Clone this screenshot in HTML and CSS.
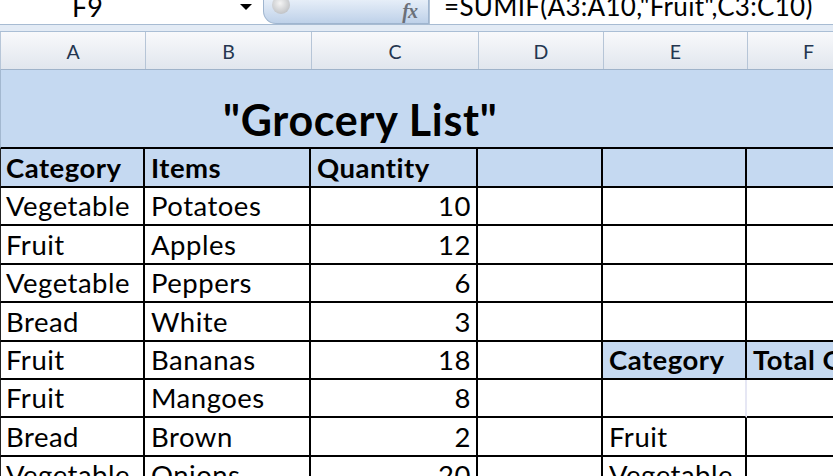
FILE: index.html
```html
<!DOCTYPE html>
<html>
<head>
<meta charset="utf-8">
<link rel="stylesheet" href="styles.css">
</head>
<body>
<div class="app">
  <div class="formula-bar">
    <div class="name-box">
      <span class="cell-ref">F9</span>
      <span class="dropdown"></span>
    </div>
    <div class="fx-pill">
      <span class="knob"></span>
      <span class="fx">fx</span>
    </div>
    <div class="formula"><span class="formula-text">=SUMIF(A3:A10,"Fruit",C3:C10)</span></div>
  </div>
  <div class="strip"></div>
  <div class="col-headers">
    <div class="ch">A</div>
    <div class="ch">B</div>
    <div class="ch">C</div>
    <div class="ch">D</div>
    <div class="ch">E</div>
    <div class="ch">F</div>
  </div>
  <div class="sheet">
    <div class="cell title">"Grocery List"</div>

    <div class="cell first blue bold">Category</div>
    <div class="cell blue bold">Items</div>
    <div class="cell blue bold">Quantity</div>
    <div class="cell blue"></div>
    <div class="cell blue"></div>
    <div class="cell blue"></div>

    <div class="cell first">Vegetable</div>
    <div class="cell">Potatoes</div>
    <div class="cell num">10</div>
    <div class="cell"></div>
    <div class="cell"></div>
    <div class="cell"></div>

    <div class="cell first">Fruit</div>
    <div class="cell">Apples</div>
    <div class="cell num">12</div>
    <div class="cell"></div>
    <div class="cell"></div>
    <div class="cell"></div>

    <div class="cell first">Vegetable</div>
    <div class="cell">Peppers</div>
    <div class="cell num">6</div>
    <div class="cell"></div>
    <div class="cell"></div>
    <div class="cell"></div>

    <div class="cell first">Bread</div>
    <div class="cell">White</div>
    <div class="cell num">3</div>
    <div class="cell"></div>
    <div class="cell"></div>
    <div class="cell"></div>

    <div class="cell first">Fruit</div>
    <div class="cell">Bananas</div>
    <div class="cell num">18</div>
    <div class="cell"></div>
    <div class="cell blue bold">Category</div>
    <div class="cell blue bold">Total Quantity</div>

    <div class="cell first">Fruit</div>
    <div class="cell">Mangoes</div>
    <div class="cell num">8</div>
    <div class="cell"></div>
    <div class="cell faint-right"></div>
    <div class="cell"></div>

    <div class="cell first">Bread</div>
    <div class="cell">Brown</div>
    <div class="cell num">2</div>
    <div class="cell"></div>
    <div class="cell">Fruit</div>
    <div class="cell"></div>

    <div class="cell first">Vegetable</div>
    <div class="cell">Onions</div>
    <div class="cell num">20</div>
    <div class="cell"></div>
    <div class="cell">Vegetable</div>
    <div class="cell"></div>
  </div>
</div>
</body>
</html>
```
FILE: styles.css
```css
html, body {
  margin: 0;
  padding: 0;
  background: #ffffff;
}
body {
  width: 833px;
  height: 476px;
  overflow: hidden;
  font-family: Lato, "Open Sans", sans-serif;
  color: #000;
}
.app {
  width: 1000px;
}

/* formula bar */
.formula-bar {
  display: flex;
  height: 24px;
  background: #fff;
  overflow: hidden;
}
.name-box {
  width: 263px;
  display: flex;
  align-items: flex-start;
  overflow: hidden;
}
.cell-ref {
  display: block;
  margin-left: 72px;
  margin-top: -9px;
  font-size: 27px;
  line-height: 31px;
  width: 150px;
}
.dropdown {
  margin-left: 18px;
  margin-top: 4px;
  width: 0;
  height: 0;
  border-left: 6px solid transparent;
  border-right: 6px solid transparent;
  border-top: 6px solid #000;
}
.fx-pill {
  width: 164px;
  height: 23px;
  border: 1px solid #9fb5cf;
  border-top: none;
  border-radius: 0 0 0 13px;
  background: linear-gradient(#e6eef8, #bed1e9);
  display: flex;
  align-items: flex-start;
  justify-content: space-between;
  overflow: hidden;
}
.knob {
  width: 18px;
  height: 18px;
  border-radius: 50%;
  margin-left: 8px;
  margin-top: -4px;
  background: radial-gradient(circle at 45% 40%, #f4f4f4, #c4c6c9 70%, #a9adb2);
}
.fx {
  font-family: "Liberation Serif", serif;
  font-style: italic;
  font-weight: bold;
  font-size: 20px;
  line-height: 22px;
  color: #6b7079;
  margin-right: 11px;
  letter-spacing: -1px;
}
.formula {
  flex: 1;
  border-left: 1px solid #b3c3d6;
  overflow: hidden;
}
.formula-text {
  display: block;
  margin-left: 14px;
  margin-top: -9px;
  font-size: 26px;
  line-height: 31px;
  letter-spacing: 0.3px;
  white-space: nowrap;
}

/* strip between formula bar and headers */
.strip {
  height: 6px;
  border-top: 1px solid #a7bbd2;
  border-bottom: 1px solid #aabed5;
  background: #e3ebf5;
}

/* column headers */
.col-headers {
  display: grid;
  grid-template-columns: 145px 166px 167px 125px 144px 122px;
  border-left: 1px solid #b7c6d8;
  height: 37px;
  border-bottom: 1px solid #9fb3ca;
  background: linear-gradient(#f8f9fb, #e1e6ee);
}
.ch {
  border-right: 1px solid #b6c5d7;
  display: flex;
  align-items: center;
  justify-content: center;
  font-size: 19.5px;
  color: #243650;
  padding-top: 2px;
}

/* sheet */
.sheet {
  display: grid;
  grid-template-columns: 145px 166px 167px 125px 144px 122px;
  grid-template-rows: 79px 39px repeat(8, 38.4px);
}
.cell {
  border-right: 2px solid #000;
  border-bottom: 2px solid #000;
  display: flex;
  align-items: flex-end;
  padding: 0 4px 2px 6px;
  font-size: 27.5px;
  line-height: 32px;
  letter-spacing: 0.5px;
  white-space: nowrap;
  overflow: hidden;
  background: #fff;
}
.cell.first {
  border-left: 1px solid #222;
  padding-left: 5px;
}
.cell.title {
  grid-column: 1 / 7;
  background: #c5d9f1;
  border-right: none;
  border-left: 1px solid #a3b8d0;
  font-weight: bold;
  font-size: 43px;
  line-height: 50px;
  letter-spacing: 0.7px;
  padding-left: 222px;
  padding-bottom: 2px;
}
.blue {
  background: #c5d9f1;
}
.bold {
  font-weight: bold;
}
.num {
  justify-content: flex-end;
  padding-right: 5px;
}
.faint-right {
  border-right-color: #e6e7f4;
}
```
